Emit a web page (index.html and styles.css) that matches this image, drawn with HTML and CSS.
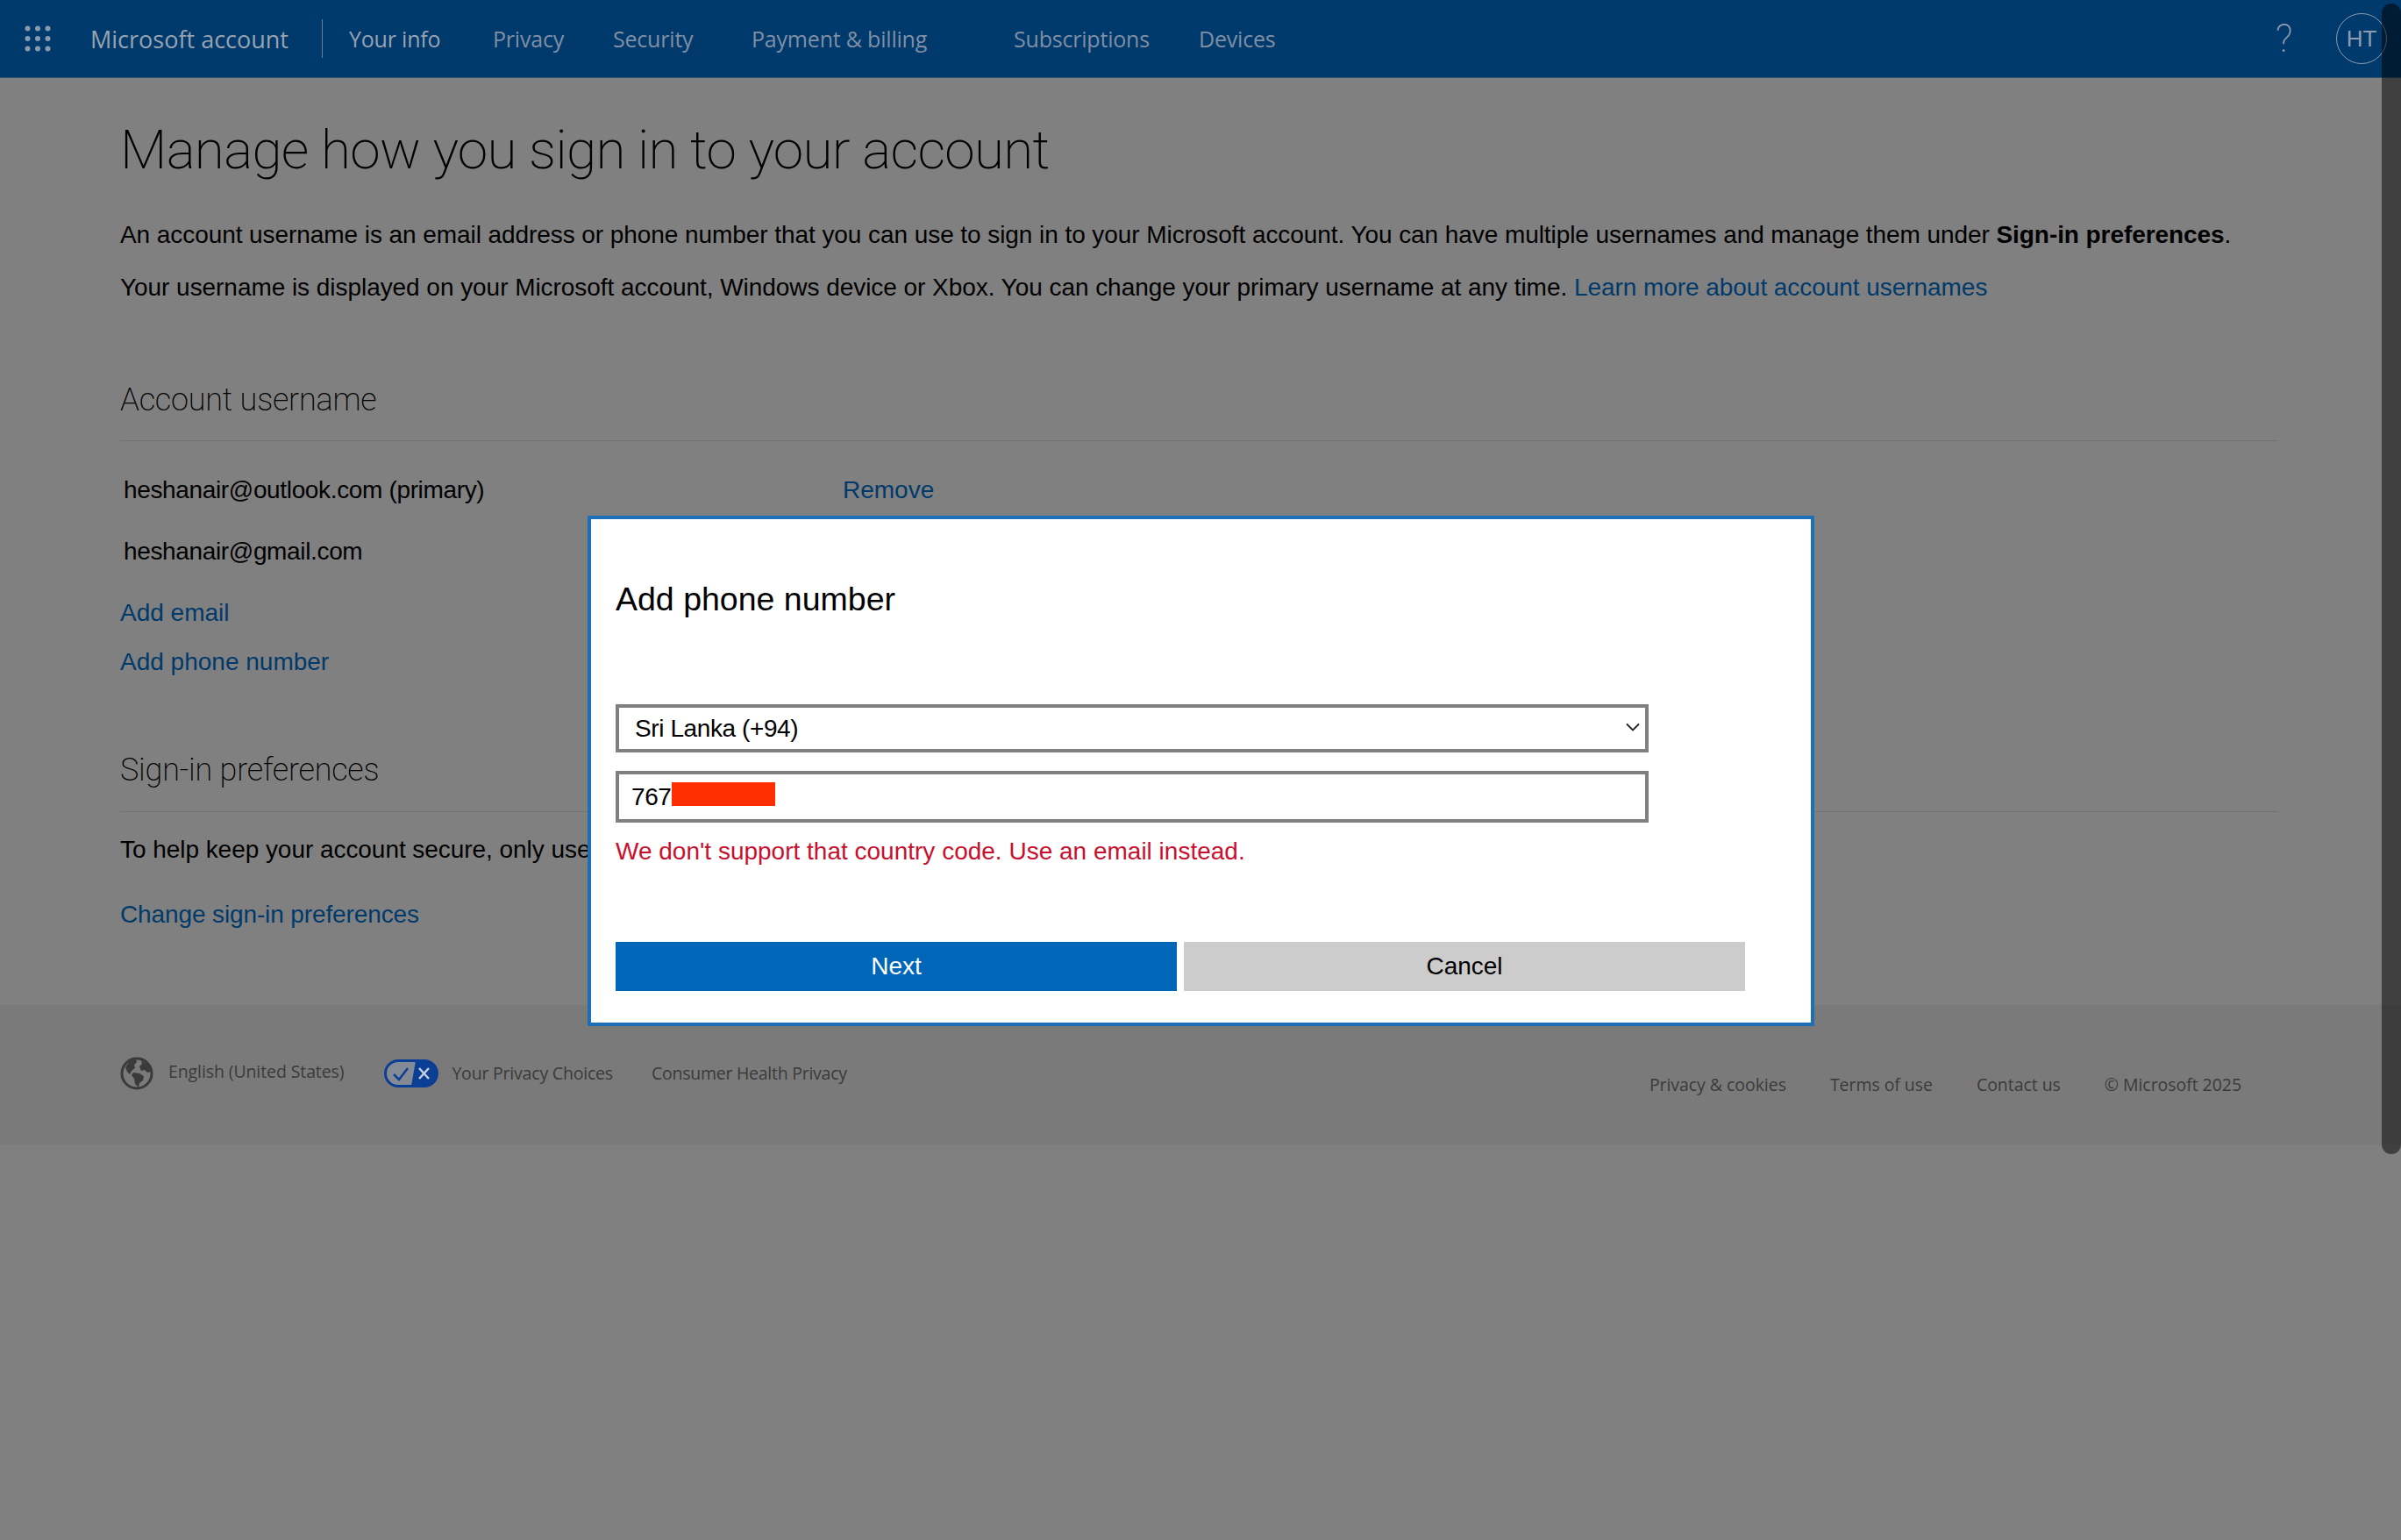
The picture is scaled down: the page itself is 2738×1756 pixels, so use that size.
FILE: index.html
```html
<!DOCTYPE html>
<html lang="en">
<head>
<meta charset="utf-8">
<title>Microsoft account</title>
<link rel="stylesheet" href="styles.css">
</head>
<body>
<div class="page">
  <header class="nav">
    <svg class="waffle" width="30" height="30" viewBox="0 0 30 30"><g fill="#8a9bb0"><circle cx="3.500" cy="3.500" r="3"/><circle cx="15" cy="3.500" r="3"/><circle cx="26.500" cy="3.500" r="3"/><circle cx="3.500" cy="15" r="3"/><circle cx="15" cy="15" r="3"/><circle cx="26.500" cy="15" r="3"/><circle cx="3.500" cy="26.500" r="3"/><circle cx="15" cy="26.500" r="3"/><circle cx="26.500" cy="26.500" r="3"/></g></svg>
    <a class="brand">Microsoft account</a>
    <span class="nav-sep"></span>
    <a class="nav-link current">Your info</a>
    <a class="nav-link privacy">Privacy</a>
    <a class="nav-link security">Security</a>
    <a class="nav-link payment">Payment &amp; billing</a>
    <a class="nav-link subs">Subscriptions</a>
    <a class="nav-link devices">Devices</a>
    <span class="nav-help">?</span>
    <span class="avatar">HT</span>
  </header>
  <main class="content">
    <h1 class="title">Manage how you sign in to your account</h1>
    <p class="lead">An account username is an email address or phone number that you can use to sign in to your Microsoft account. You can have multiple usernames and manage them under <b>Sign-in preferences</b>.</p>
    <p class="lead second">Your username is displayed on your Microsoft account, Windows device or Xbox. You can change your primary username at any time. <a class="link">Learn more about account usernames</a></p>
    <h2 class="section first">Account username</h2>
    <div class="row r1"><span class="name">heshanair@outlook.com (primary)</span><a class="link">Remove</a></div>
    <div class="row r2"><span class="name">heshanair@gmail.com</span></div>
    <div class="row r3"><a class="link">Add email</a></div>
    <div class="row r4"><a class="link">Add phone number</a></div>
    <h2 class="section second-sec">Sign-in preferences</h2>
    <p class="pref">To help keep your account secure, only use</p>
    <a class="link change">Change sign-in preferences</a>
  </main>
  <footer class="footer">
    <div class="foot-left">
      <svg class="globe" width="38" height="38" viewBox="0 0 38 38"><circle cx="19" cy="19" r="17" fill="none" stroke="#3a3a3a" stroke-width="3"/><path d="M6 12l5-7 7-2 1 3-3 3 1 4-4 3-2 4-3-3zM24 4l8 5 3 8-4 1-3-3-4 1-2-5 3-3zM15 18l7 1 5 3-1 5-4 3-1 5-4-4-1-6-3-4z" fill="#3a3a3a"/></svg>
      <span class="lang">English (United States)</span>
      <svg class="choices" width="62" height="32" viewBox="0 0 62 32"><rect x="1.500" y="1.500" width="59" height="29" rx="14.500" fill="#858b95" stroke="#0b3f96" stroke-width="3"/><path d="M36 1.500h10a14.500 14.500 0 0 1 0 29H31z" fill="#0b3f96"/><path d="M11 17l6 6 10-13" fill="none" stroke="#0b3f96" stroke-width="2.500"/><path d="M40 10l11 12M51 10L40 22" stroke="#c5cedd" stroke-width="2.500"/></svg>
      <a class="foot-link choices-text">Your Privacy Choices</a>
      <a class="foot-link health">Consumer Health Privacy</a>
    </div>
    <div class="foot-right">
      <a class="foot-link">Privacy &amp; cookies</a>
      <a class="foot-link">Terms of use</a>
      <a class="foot-link">Contact us</a>
      <span class="foot-link">© Microsoft 2025</span>
    </div>
  </footer>
  <div class="scrollthumb"></div>
  <section class="dialog">
    <h3 class="dialog-title">Add phone number</h3>
    <div class="field select-field"><span>Sri Lanka (+94)</span>
      <svg class="chev" width="16" height="10" viewBox="0 0 16 10"><path d="M1 1.500l7 7 7-7" fill="none" stroke="#222" stroke-width="1.800"/></svg>
    </div>
    <div class="field input-field"><span>767</span><span class="redact"></span></div>
    <p class="error">We don't support that country code. Use an email instead.</p>
    <div class="actions">
      <button class="btn primary">Next</button>
      <button class="btn secondary">Cancel</button>
    </div>
  </section>
</div>
</body>
</html>
```
FILE: styles.css
```css
* { box-sizing: border-box; }
html, body { margin: 0; padding: 0; height: 100%; overflow: hidden; }
body { background: #808080; font-family: "Liberation Sans", Arial, sans-serif; color: #000; }
.page { position: relative; width: 2738px; height: 1756px; background: #808080; overflow: hidden; }

.nav { height: 89px; background: #00396b; display: flex; align-items: center; font-family: "Open Sans", sans-serif; font-size: 25px; letter-spacing: -0.2px; color: #7f8fa5; position: relative; border-bottom: 1px solid #35536f; }
.waffle { margin-left: 28px; flex: none; }
.brand { margin-left: 45px; color: #98a3b2; font-size: 27px; letter-spacing: 0; width: 244px; white-space: nowrap; }
.nav-sep { width: 1px; height: 44px; background: #6a7f96; margin: 0 30px 0 20px; }
.nav-link { white-space: nowrap; }
.nav-link.current { color: #98a3b2; font-size: 25px; width: 104px; }
.nav-link.privacy { margin-left: 60px; width: 78px; }
.nav-link.security { margin-left: 59px; width: 92px; }
.nav-link.payment { margin-left: 66px; width: 202px; }
.nav-link.subs { margin-left: 97px; width: 152px; }
.nav-link.devices { margin-left: 59px; }
.nav-help { margin-left: auto; margin-right: 50px; font-family: Roboto, sans-serif; font-size: 44px; font-weight: 200; color: #8c9cb1; }
.avatar { width: 58px; height: 58px; border: 1.500px solid #8c9cb1; border-radius: 50%; display: flex; align-items: center; justify-content: center; font-family: "Liberation Sans", sans-serif; font-size: 26px; letter-spacing: 0; color: #8c9cb1; margin-right: 16px; flex: none; }

.content { padding: 0 140px 0 137px; height: 1057px; }
.title { margin: 0; padding-top: 43px; font-family: Roboto, sans-serif; font-weight: 200; font-size: 62px; letter-spacing: -0.69px; line-height: 78px; color: #000; white-space: nowrap; }
.lead { margin: 0; font-size: 28px; letter-spacing: -0.07px; line-height: 40px; white-space: nowrap; }
.lead:not(.second) { margin-top: 38px; }
.lead.second { margin-top: 20px; letter-spacing: -0.05px; }
.link { color: #003a6b; }
.section { margin: 0; font-family: Roboto, sans-serif; font-weight: 200; font-size: 36px; letter-spacing: -0.2px; line-height: 50px; border-bottom: 1px solid #727272; white-space: nowrap; }
.section.first { margin-top: 83px; padding-bottom: 21px; }
.row { font-size: 28px; line-height: 40px; display: flex; }
.row.r1 { margin-top: 36px; }
.row.r2, .row.r3 { margin-top: 30px; }
.row.r4 { margin-top: 16px; }
.name { width: 824px; padding-left: 4px; letter-spacing: -0.35px; }
.section.second-sec { margin-top: 78px; padding-bottom: 22px; }
.pref { margin: 23px 0 0; font-size: 28px; letter-spacing: -0.05px; line-height: 40px; white-space: nowrap; }
.change { display: block; margin-top: 34px; font-size: 28px; letter-spacing: -0.12px; line-height: 40px; }

.footer { height: 159px; background: #7a7a7a; display: flex; justify-content: space-between; font-family: "Open Sans", sans-serif; font-size: 19.500px; color: #3a3a3a; padding: 0 182px 0 137px; }
.foot-left { display: flex; align-items: center; height: 155px; letter-spacing: -0.1px; }
.globe { flex: none; }
.lang { margin-left: 17px; margin-bottom: 4px; }
.choices { margin-left: 46px; flex: none; }
.foot-link { color: #3a3a3a; white-space: nowrap; }
.choices-text { margin-left: 15px; letter-spacing: -0.2px; }
.health { margin-left: 44px; letter-spacing: -0.25px; }
.foot-right { display: flex; gap: 50px; align-items: center; height: 180px; letter-spacing: -0.05px; }

.scrollthumb { position: absolute; right: 0; top: 4px; width: 22px; height: 1312px; border-radius: 11px; background: rgba(0,0,0,.5); }

.dialog { position: absolute; left: 670px; top: 588px; width: 1399px; height: 582px; background: #fff; border: 4px solid #1d70b7; padding: 0 28px; }
.dialog-title { margin: 0; padding-top: 67px; font-weight: 400; font-size: 37.500px; line-height: 48px; }
.field { width: 1178px; border: 4px solid #808080; display: flex; align-items: center; font-size: 28px; letter-spacing: -0.4px; position: relative; }
.select-field { margin-top: 96px; height: 55px; padding-left: 18px; }
.chev { position: absolute; right: 6px; top: 17px; }
.input-field { margin-top: 21px; height: 59px; padding-left: 14px; }
.redact { display: block; position: absolute; left: 60px; top: 9px; width: 118px; height: 27px; background: #ff2f00; }
.error { margin: 15px 0 0; font-size: 28px; line-height: 36px; color: #c8102e; white-space: nowrap; }
.actions { display: flex; gap: 8px; margin-top: 85px; }
.btn { width: 640px; height: 56px; border: 0; font-family: inherit; font-size: 28px; padding: 0; }
.btn.primary { background: #0067b8; color: #fff; }
.btn.secondary { background: #cccccc; color: #000; }
```
